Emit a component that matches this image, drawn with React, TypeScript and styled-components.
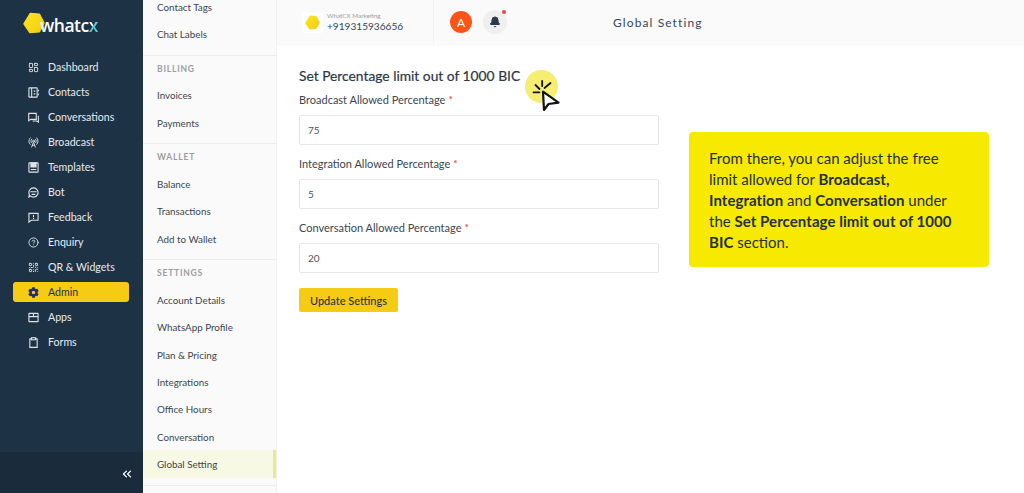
import type { ReactNode } from 'react';
import styled, { createGlobalStyle } from 'styled-components';
import { Bell, ChevronsLeft, CircleHelp, LayoutDashboard, QrCode, RadioTower } from 'lucide-react';
import { FaCog } from 'react-icons/fa';

const GlobalStyle = createGlobalStyle`
  html, body {
    margin: 0;
    padding: 0;
    height: 100%;
    overflow: hidden;
    background: #fff;
    font-family: Lato, 'Noto Sans', sans-serif;
  }
  * {
    box-sizing: border-box;
  }
`;

const Page = styled.div`
  display: flex;
  width: 1024px;
  height: 493px;
  overflow: hidden;
`;

const Sidebar = styled.aside`
  width: 143px;
  flex: none;
  display: flex;
  flex-direction: column;
  background: #1e3246;
`;

const LogoRow = styled.div`
  height: 54px;
  padding: 12px 0 0 23px;
  display: flex;
  align-items: flex-start;
`;

const LogoText = styled.span`
  margin: 1px 0 0 -5px;
  color: #fff;
  font-size: 17.5px;
  line-height: 24px;
  font-weight: 600;
  font-family: 'Open Sans', Lato, sans-serif;
  letter-spacing: -0.5px;

  em {
    font-style: normal;
    color: transparent;
    background: linear-gradient(135deg, #fff 48%, #5cc6cf 52%);
    -webkit-background-clip: text;
    background-clip: text;
  }
`;

const NavList = styled.nav`
  flex: 1;
  display: flex;
  flex-direction: column;
  padding: 3px 14px 0 13px;
`;

const NavItem = styled.div<{ $active?: boolean }>`
  height: 20px;
  margin-bottom: 5px;
  display: flex;
  align-items: center;
  gap: 9px;
  padding-left: 15px;
  border-radius: 3px;
  font-size: 10.6px;
  color: ${(p) => (p.$active ? '#1e3246' : '#e6eaee')};
  background: ${(p) => (p.$active ? '#f5cb14' : 'transparent')};
  svg {
    flex: none;
    color: ${(p) => (p.$active ? '#1c2f6b' : '#dfe3e8')};
  }
`;

const CollapseBar = styled.div`
  height: 41px;
  display: flex;
  align-items: center;
  justify-content: flex-end;
  padding: 3px 9px 0 0;
  background: #1a2b3c;
  color: #fff;
`;

const SubMenu = styled.aside`
  width: 134px;
  flex: none;
  overflow: hidden;
  background: #fafafa;
  border-right: 1px solid #f1f1f1;
`;

const SubGroup = styled.div`
  padding: 0 0 7px;
  border-bottom: 1px solid #eeeeee;
  &:first-child {
    margin-top: -7px;
  }
`;

const GroupTitle = styled.div`
  height: 26px;
  padding: 0 0 0 14px;
  display: flex;
  align-items: center;
  font-size: 8.5px;
  font-weight: 700;
  letter-spacing: 0.8px;
  color: #9a9da1;
`;

const SubItem = styled.div<{ $active?: boolean }>`
  height: 27.35px;
  padding-left: 14px;
  display: flex;
  align-items: center;
  font-size: 9.8px;
  color: #3b4650;
  background: ${(p) => (p.$active ? '#f8f9e4' : 'transparent')};
  border-right: 3px solid ${(p) => (p.$active ? '#e9ea8c' : 'transparent')};
`;

const Main = styled.main`
  flex: 1;
  display: flex;
  flex-direction: column;
  min-width: 0;
`;

const Header = styled.header`
  height: 46px;
  flex: none;
  display: flex;
  align-items: center;
  padding-bottom: 2px;
  background: #fafafa;
`;

const AccountChip = styled.div`
  width: 157px;
  height: 44px;
  padding-left: 25px;
  display: flex;
  align-items: center;
  gap: 4px;
  border-right: 1px solid #f1f1f1;
`;

const AccountLogo = styled.div`
  width: 21px;
  height: 21px;
  display: flex;
  align-items: center;
  justify-content: center;
  background: #fff;
  border-radius: 2px;
`;

const AccountText = styled.div`
  display: flex;
  flex-direction: column;
`;

const AccountName = styled.span`
  font-size: 6.3px;
  line-height: 8px;
  color: #9a9da1;
`;

const AccountPhone = styled.span`
  font-size: 10.1px;
  line-height: 13px;
  color: #34465a;
`;

const Avatar = styled.div`
  width: 22px;
  height: 22px;
  margin-left: 16px;
  border-radius: 50%;
  display: flex;
  align-items: center;
  justify-content: center;
  background: #fd5519;
  color: #fff;
  font-size: 12px;
`;

const BellButton = styled.div`
  position: relative;
  width: 24px;
  height: 24px;
  margin-left: 11px;
  border-radius: 50%;
  display: flex;
  align-items: center;
  justify-content: center;
  background: #efefef;
  color: #2b3a4c;
`;

const BellDot = styled.span`
  position: absolute;
  top: 0;
  right: 1px;
  width: 4px;
  height: 4px;
  border-radius: 50%;
  background: #f0443e;
`;

const PageTitle = styled.h1`
  margin: 0 0 0 106px;
  font-size: 12px;
  font-weight: 400;
  letter-spacing: 1.1px;
  color: #35465a;
`;

const Content = styled.div`
  flex: 1;
  display: flex;
  padding: 20px 35px 0 22px;
  background: #fff;
`;

const FormColumn = styled.section`
  width: 360px;
  flex: none;
  display: flex;
  flex-direction: column;
`;

const FormTitleRow = styled.div`
  position: relative;
`;

const FormTitle = styled.h2`
  margin: 0;
  height: 19px;
  font-size: 13.8px;
  line-height: 19px;
  font-weight: 400;
  -webkit-text-stroke: 0.2px #2b3644;
  color: #2b3644;
`;

const Pointer = styled.div`
  position: absolute;
  left: 226px;
  top: 4px;
  width: 33px;
  height: 33px;
  border-radius: 50%;
  background: #f6ee72;
`;

const PointerMark = styled.svg`
  position: absolute;
  left: 0;
  top: 0;
  overflow: visible;
`;

const Field = styled.div`
  margin-top: 5px;
  margin-bottom: 4px;
`;

const FieldLabel = styled.label`
  display: block;
  height: 19px;
  margin-bottom: 6px;
  font-size: 11px;
  line-height: 19px;
  color: #3b4650;
`;

const RequiredMark = styled.span`
  margin-left: 3px;
  color: #f0544c;
  font-size: 10px;
  font-weight: 700;
  line-height: 0;
  vertical-align: 1px;
`;

const FieldInput = styled.div`
  height: 30px;
  padding-left: 8px;
  display: flex;
  align-items: center;
  font-size: 10px;
  color: #4a5560;
  background: #fff;
  border: 1px solid #e6e7e8;
  border-radius: 2px;
`;

const UpdateButton = styled.button`
  width: 99px;
  height: 24px;
  margin-top: 11px;
  padding: 0;
  border: none;
  border-radius: 2px;
  background: #f5cb14;
  color: #2b3644;
  font-family: inherit;
  font-size: 11px;
  font-weight: 500;
`;

const Callout = styled.aside`
  width: 300px;
  height: 135px;
  margin: 66px 0 0 30px;
  padding: 16px 30px 16px 20px;
  border-radius: 4px;
  background: #f7ea00;
  color: #253140;
  font-size: 15px;
  line-height: 21px;

  b {
    font-weight: 700;
    letter-spacing: 0.06px;
  }
`;

const Hexagon = ({ size }: { size: number }) => (
  <svg width={size} height={size} viewBox="0 0 24 24" style={{ flex: 'none' }}>
    <defs>
      <linearGradient id="hex" x1="0" y1="0" x2="1" y2="1">
        <stop offset="0" stopColor="#f8e71c" />
        <stop offset="1" stopColor="#f5cb14" />
      </linearGradient>
    </defs>
    <path d="M8 1.5 L18 2.5 L23 12 L18 21.5 L7.5 22.5 L1 13 Z" fill="url(#hex)" stroke="url(#hex)" strokeWidth="1.5" strokeLinejoin="round" />
  </svg>
);

const CursorMark = () => (
  <PointerMark width="40" height="44" viewBox="0 0 40 44">
    <g stroke="#111" strokeWidth="1.8" strokeLinecap="round" fill="none">
      <path d="M17.2 11 V16" />
      <path d="M10.5 15 L14.5 19" />
      <path d="M8.5 22.3 H14.5" />
      <path d="M25.5 13 L19.5 18" />
    </g>
    <path d="M18 21.7 L19 40 L23.5 34 L33.5 32.7 Z" fill="#fff" stroke="#111" strokeWidth="2.2" strokeLinejoin="round" />
  </PointerMark>
);

const Glyph = ({ children }: { children: ReactNode }) => (
  <svg width="11" height="11" viewBox="0 0 12 12" fill="none" stroke="currentColor" strokeWidth="1.2">
    {children}
  </svg>
);

const navItems: { label: string; icon: ReactNode; active?: boolean }[] = [
  { label: 'Dashboard', icon: <LayoutDashboard size={11} strokeWidth={2} /> },
  {
    label: 'Contacts',
    icon: (
      <Glyph>
        <rect x="1" y="1" width="9" height="10" rx="0.5" />
        <path d="M4 1 V11 M11.3 3 V5 M11.3 7 V9 M6.2 4.5 H8 M6.2 7.5 H8" />
      </Glyph>
    ),
  },
  {
    label: 'Conversations',
    icon: (
      <Glyph>
        <path d="M0.8 1.5 H9 V8 H3 L0.8 9.5 Z" />
        <path d="M11.3 4 V11 L9.5 9.8 H5" />
      </Glyph>
    ),
  },
  { label: 'Broadcast', icon: <RadioTower size={11} strokeWidth={2} /> },
  {
    label: 'Templates',
    icon: (
      <Glyph>
        <rect x="1" y="1" width="10" height="10" rx="0.5" />
        <rect x="3.2" y="1" width="5.6" height="4.4" fill="currentColor" />
        <path d="M3 8.2 H9" />
      </Glyph>
    ),
  },
  {
    label: 'Bot',
    icon: (
      <Glyph>
        <path d="M6 1 A5 5 0 1 1 2.5 9.6 L1 11 L1.4 8 A5 5 0 0 1 6 1 Z" />
        <path d="M2.5 5.2 H9.5 M4 8 H8" />
      </Glyph>
    ),
  },
  {
    label: 'Feedback',
    icon: (
      <Glyph>
        <path d="M1 1.5 H11 V9 H3.5 L1 11 Z" />
        <path d="M6 3.2 V5.6 M6 6.6 V7.6" />
      </Glyph>
    ),
  },
  { label: 'Enquiry', icon: <CircleHelp size={11} strokeWidth={2} /> },
  { label: 'QR & Widgets', icon: <QrCode size={11} strokeWidth={2} /> },
  { label: 'Admin', icon: <FaCog size={11} />, active: true },
  {
    label: 'Apps',
    icon: (
      <Glyph>
        <rect x="1" y="1.5" width="10" height="9" rx="0.5" />
        <path d="M1 5 H11" strokeWidth="1.4" />
        <path d="M6 1.5 V5" />
      </Glyph>
    ),
  },
  {
    label: 'Forms',
    icon: (
      <Glyph>
        <path d="M3.5 2 H2 V11.3 H10 V2 H8.5" />
        <rect x="3.8" y="0.8" width="4.4" height="2.2" />
      </Glyph>
    ),
  },
];

const subGroups = [
  { items: ['Contact Tags', 'Chat Labels'] },
  { title: 'BILLING', items: ['Invoices', 'Payments'] },
  { title: 'WALLET', items: ['Balance', 'Transactions', 'Add to Wallet'] },
  {
    title: 'SETTINGS',
    items: ['Account Details', 'WhatsApp Profile', 'Plan & Pricing', 'Integrations', 'Office Hours', 'Conversation', 'Global Setting'],
  },
];

const fields = [
  { label: 'Broadcast Allowed Percentage', value: '75' },
  { label: 'Integration Allowed Percentage', value: '5' },
  { label: 'Conversation Allowed Percentage', value: '20' },
];

export default function App() {
  return (
    <>
      <GlobalStyle />
      <Page>
        <Sidebar>
          <LogoRow>
            <Hexagon size={22} />
            <LogoText>
              whatc<em>x</em>
            </LogoText>
          </LogoRow>
          <NavList>
            {navItems.map(({ label, icon, active }) => (
              <NavItem key={label} $active={active}>
                {icon}
                {label}
              </NavItem>
            ))}
          </NavList>
          <CollapseBar>
            <ChevronsLeft size={14} strokeWidth={2.2} />
          </CollapseBar>
        </Sidebar>
        <SubMenu>
          {subGroups.map((group) => (
            <SubGroup key={group.items[0]}>
              {group.title && <GroupTitle>{group.title}</GroupTitle>}
              {group.items.map((item) => (
                <SubItem key={item} $active={item === 'Global Setting'}>
                  {item}
                </SubItem>
              ))}
            </SubGroup>
          ))}
        </SubMenu>
        <Main>
          <Header>
            <AccountChip>
              <AccountLogo>
                <Hexagon size={15} />
              </AccountLogo>
              <AccountText>
                <AccountName>WhatCX Marketing</AccountName>
                <AccountPhone>+919315936656</AccountPhone>
              </AccountText>
            </AccountChip>
            <Avatar>A</Avatar>
            <BellButton>
              <Bell size={12} fill="currentColor" />
              <BellDot />
            </BellButton>
            <PageTitle>Global Setting</PageTitle>
          </Header>
          <Content>
            <FormColumn>
              <FormTitleRow>
                <FormTitle>Set Percentage limit out of 1000 BIC</FormTitle>
                <Pointer>
                  <CursorMark />
                </Pointer>
              </FormTitleRow>
              {fields.map((field) => (
                <Field key={field.label}>
                  <FieldLabel>
                    {field.label}
                    <RequiredMark>*</RequiredMark>
                  </FieldLabel>
                  <FieldInput>{field.value}</FieldInput>
                </Field>
              ))}
              <UpdateButton>Update Settings</UpdateButton>
            </FormColumn>
            <Callout>
              From there, you can adjust the free limit allowed for <b>Broadcast,</b> <b>Integration</b> and{' '}
              <b>Conversation</b> under the <b>Set Percentage limit out of 1000 BIC</b> section.
            </Callout>
          </Content>
        </Main>
      </Page>
    </>
  );
}
